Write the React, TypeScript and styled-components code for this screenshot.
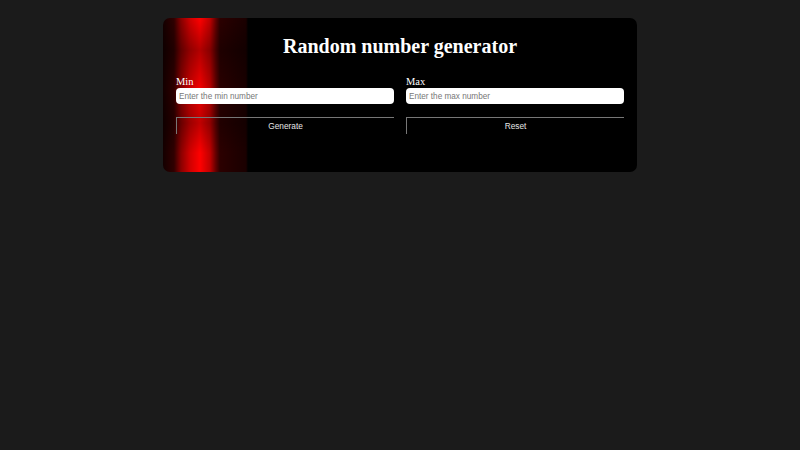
import styled, { createGlobalStyle } from "styled-components";

const GlobalStyle = createGlobalStyle`
  html, body {
    margin: 0;
    background-color: #1b1b1b;
  }
`;

const Card = styled.div`
  width: 474px;
  height: 154px;
  box-sizing: border-box;
  margin: 18px auto 0;
  padding: 17px 13px 0;
  border-radius: 7px;
  background:
    linear-gradient(
      180deg,
      rgba(0, 0, 0, 0) 0px,
      rgba(0, 0, 0, 0.3) 32px,
      rgba(0, 0, 0, 0.05) 70px,
      rgba(0, 0, 0, 0.25) 105px,
      rgba(0, 0, 0, 0) 135px
    ) 0 0 / 84px 100% no-repeat,
    linear-gradient(
      90deg,
      #140000 0px,
      #300000 11px,
      #8a0000 18px,
      #d00000 27px,
      #ff0000 37px,
      #c00000 47px,
      #600000 53px,
      #2c0000 57px,
      #220000 70px,
      #1a0000 83px,
      #000000 85px
    ) 0 0 / 100% 100% no-repeat,
    #000;
`;

const Title = styled.h1`
  margin: 0;
  font-family: "Liberation Serif", serif;
  font-size: 20px;
  line-height: 23px;
  font-weight: bold;
  color: #fff;
  text-align: center;
`;

const Fields = styled.div`
  display: grid;
  grid-template-columns: 1fr 1fr;
  column-gap: 12px;
  margin-top: 18px;
`;

const Column = styled.div`
  display: flex;
  flex-direction: column;
`;

const Label = styled.label`
  font-family: "Liberation Serif", serif;
  font-size: 10.5px;
  line-height: 12px;
  color: #fff;
`;

const Input = styled.input`
  height: 16px;
  box-sizing: border-box;
  border: none;
  border-radius: 4px;
  padding: 0 3px;
  background: #fff;
  font-family: "Liberation Sans", sans-serif;
  font-size: 8.2px;
  color: #222;
  outline: none;

  &::placeholder {
    color: #777;
  }
`;

const Button = styled.button`
  height: 17px;
  margin-top: 13px;
  box-sizing: border-box;
  padding: 0;
  border: none;
  border-top: 1px solid #777;
  border-left: 1px solid #777;
  background: transparent;
  font-family: "Liberation Sans", sans-serif;
  font-size: 8.3px;
  color: #e6e6e6;
`;

function App() {
  return (
    <>
      <GlobalStyle />
      <Card>
        <Title>Random number generator</Title>
        <Fields>
          <Column>
            <Label htmlFor="min">Min</Label>
            <Input id="min" type="number" placeholder="Enter the min number" />
            <Button>Generate</Button>
          </Column>
          <Column>
            <Label htmlFor="max">Max</Label>
            <Input id="max" type="number" placeholder="Enter the max number" />
            <Button>Reset</Button>
          </Column>
        </Fields>
      </Card>
    </>
  );
}

export default App;
